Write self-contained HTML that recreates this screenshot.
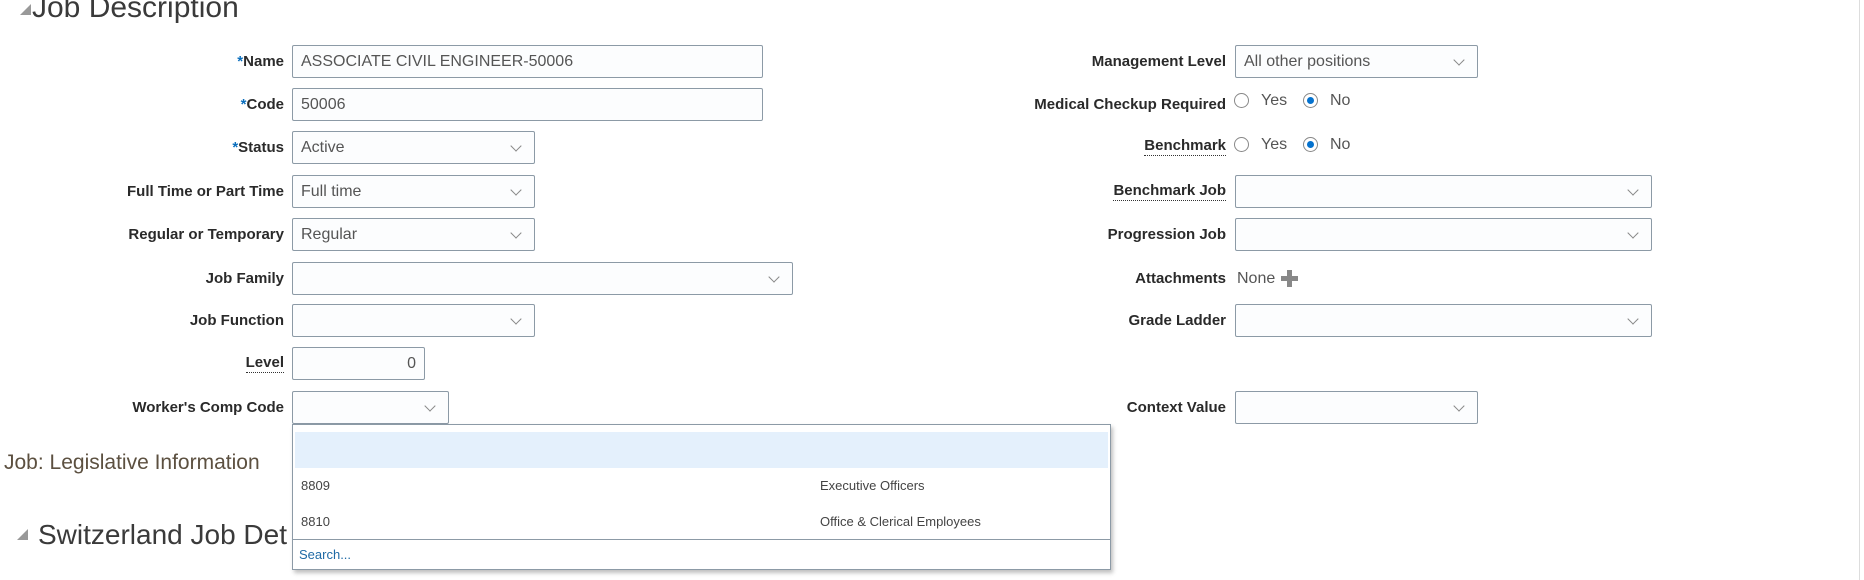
<!DOCTYPE html>
<html><head><meta charset="utf-8"><style>
*{box-sizing:border-box;margin:0;padding:0}
body{width:1864px;height:580px;background:#fff;position:relative;overflow:hidden;font-family:"Liberation Sans",sans-serif}
.a{position:absolute}
.lbl{position:absolute;font-size:15px;font-weight:bold;color:#2a2a2a;text-align:right;white-space:nowrap;line-height:33px}
.r1{right:calc(1864px - 284px)}
.r2{right:calc(1864px - 1226px)}
.st{color:#0a6ebd}
.in{position:absolute;height:33px;border:1px solid #8c9aa6;background:#fcfdfe;font-size:16px;color:#555;line-height:31px;padding-left:8px;border-radius:2px}
.in.dd::after{content:"";position:absolute;right:14px;top:10px;width:7px;height:7px;border-right:1px solid #888;border-bottom:1px solid #888;transform:rotate(45deg)}
.rad{position:absolute;width:15px;height:15px;border:1px solid #888;border-radius:50%;background:#fff}
.rad.on::after{content:"";position:absolute;left:3px;top:3px;width:7px;height:7px;border-radius:50%;background:#0572ce}
.rt{position:absolute;font-size:16px;color:#555}
</style></head><body>
<div class="a" style="left:20px;top:4px;width:0;height:0;border-left:11px solid transparent;border-bottom:11px solid #999"></div>
<div class="a" style="left:32px;top:-10px;font-size:30px;color:#3a3a3a;line-height:36px">Job Description</div>

<div class="lbl r1" style="top:45px"><span class="st">*</span>Name</div>
<div class="in" style="left:292px;top:45px;width:471px">ASSOCIATE CIVIL ENGINEER-50006</div>
<div class="lbl r1" style="top:88px"><span class="st">*</span>Code</div>
<div class="in" style="left:292px;top:88px;width:471px">50006</div>
<div class="lbl r1" style="top:131px"><span class="st">*</span>Status</div>
<div class="in dd" style="left:292px;top:131px;width:243px">Active</div>
<div class="lbl r1" style="top:175px">Full Time or Part Time</div>
<div class="in dd" style="left:292px;top:175px;width:243px">Full time</div>
<div class="lbl r1" style="top:218px">Regular or Temporary</div>
<div class="in dd" style="left:292px;top:218px;width:243px">Regular</div>
<div class="lbl r1" style="top:262px">Job Family</div>
<div class="in dd" style="left:292px;top:262px;width:501px"></div>
<div class="lbl r1" style="top:304px">Job Function</div>
<div class="in dd" style="left:292px;top:304px;width:243px"></div>
<div class="lbl r1" style="top:354px;line-height:18px;border-bottom:1px dotted #333">Level</div>
<div class="in" style="left:292px;top:347px;width:133px;text-align:right;padding-right:8px">0</div>
<div class="lbl r1" style="top:391px">Worker's Comp Code</div>
<div class="in dd" style="left:292px;top:391px;width:157px"></div>

<div class="lbl r2" style="top:45px">Management Level</div>
<div class="in dd" style="left:1235px;top:45px;width:243px">All other positions</div>
<div class="lbl r2" style="top:88px">Medical Checkup Required</div>
<div class="rad" style="left:1234px;top:93px"></div><div class="rt" style="left:1261px;top:92px">Yes</div>
<div class="rad on" style="left:1303px;top:93px"></div><div class="rt" style="left:1330px;top:92px">No</div>
<div class="lbl r2" style="top:137px;line-height:18px;border-bottom:1px dotted #333">Benchmark</div>
<div class="rad" style="left:1234px;top:137px"></div><div class="rt" style="left:1261px;top:136px">Yes</div>
<div class="rad on" style="left:1303px;top:137px"></div><div class="rt" style="left:1330px;top:136px">No</div>
<div class="lbl r2" style="top:182px;line-height:18px;border-bottom:1px dotted #333">Benchmark Job</div>
<div class="in dd" style="left:1235px;top:175px;width:417px"></div>
<div class="lbl r2" style="top:218px">Progression Job</div>
<div class="in dd" style="left:1235px;top:218px;width:417px"></div>
<div class="lbl r2" style="top:262px">Attachments</div>
<div class="rt" style="left:1237px;top:270px">None</div>
<div class="a" style="left:1281px;top:276px;width:17px;height:5px;background:#888"></div>
<div class="a" style="left:1287px;top:270px;width:5px;height:17px;background:#888"></div>
<div class="lbl r2" style="top:304px">Grade Ladder</div>
<div class="in dd" style="left:1235px;top:304px;width:417px"></div>
<div class="lbl r2" style="top:391px">Context Value</div>
<div class="in dd" style="left:1235px;top:391px;width:243px"></div>
<div class="a" style="left:1859px;top:0;width:1px;height:580px;background:#ddd"></div>

<div class="a" style="left:4px;top:451px;font-size:21px;color:#5c5040">Job: Legislative Information</div>
<div class="a" style="left:17px;top:529px;width:0;height:0;border-left:11px solid transparent;border-bottom:11px solid #999"></div>
<div class="a" style="left:38px;top:517px;font-size:28px;color:#3a3a3a;line-height:36px">Switzerland Job Det</div>

<div class="a" style="left:292px;top:424px;width:819px;height:146px;border:1px solid #8c9aa6;background:#fff;box-shadow:2px 3px 4px rgba(0,0,0,.25)">
<div class="a" style="left:2px;top:7px;width:813px;height:36px;background:#e4f0fc"></div>
<div class="a" style="left:8px;top:53px;font-size:13px;color:#444">8809</div>
<div class="a" style="left:527px;top:53px;font-size:13px;color:#444">Executive Officers</div>
<div class="a" style="left:8px;top:89px;font-size:13px;color:#444">8810</div>
<div class="a" style="left:527px;top:89px;font-size:13px;color:#444">Office &amp; Clerical Employees</div>
<div class="a" style="left:0;top:114px;width:817px;height:1px;background:#8c9aa6"></div>
<div class="a" style="left:6px;top:122px;font-size:13px;color:#1f6aa5">Search...</div>
</div>
</body></html>
